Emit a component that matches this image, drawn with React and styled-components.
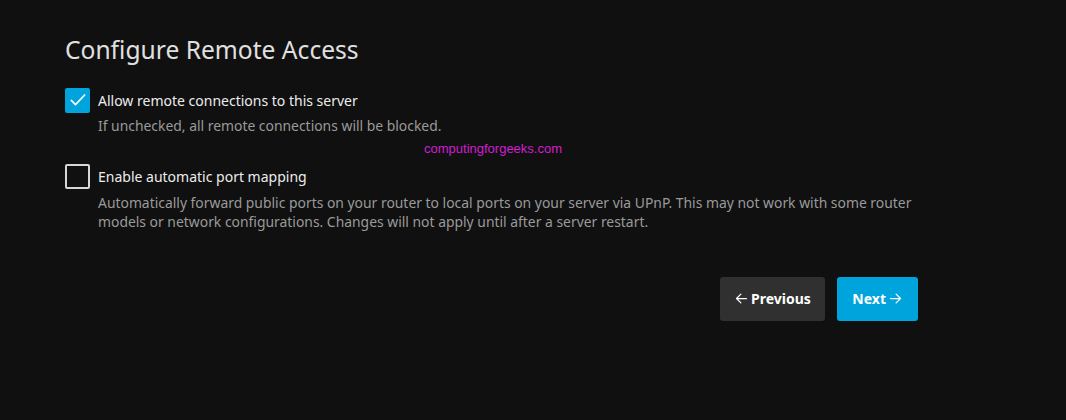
import React from 'react';
import styled, { createGlobalStyle } from 'styled-components';

const GlobalStyle = createGlobalStyle`
  html, body {
    margin: 0;
    padding: 0;
    background: #101010;
  }
  body {
    font-family: 'Noto Sans', 'Open Sans', sans-serif;
    color: rgba(255, 255, 255, 0.87);
  }
`;

const Page = styled.div`
  width: 1066px;
  height: 420px;
  box-sizing: border-box;
  padding: 33px 148px 0 65px;
  background: #101010;
`;

const Title = styled.h1`
  margin: 0 0 20px 0;
  font-size: 24.6px;
  font-weight: 400;
  line-height: 34px;
  color: #e0e0e0;
`;

const Field = styled.div``;

const CheckRow = styled.label`
  display: flex;
  align-items: center;
  gap: 8px;
  height: 26px;
`;

const Box = styled.span`
  width: 25px;
  height: 25px;
  box-sizing: border-box;
  border-radius: 2px;
  display: flex;
  align-items: center;
  justify-content: center;
  background: ${(p) => (p.$checked ? '#00a4dc' : 'transparent')};
  border: ${(p) => (p.$checked ? 'none' : '2px solid #d6d6d6')};
`;

const Label = styled.span`
  font-size: 14px;
  color: #ececec;
`;

const Desc = styled.div`
  margin: 3px 0 0 33px;
  font-size: 13.9px;
  line-height: 19.5px;
  color: #9a9a9a;
`;

const Watermark = styled.div`
  margin: 5px 0 7px 359px;
  font-family: 'Liberation Sans', Arial, sans-serif;
  font-size: 13px;
  line-height: 16px;
  color: #d21ed2;
`;

const Buttons = styled.div`
  display: flex;
  justify-content: flex-end;
  gap: 12px;
  margin-top: 45px;
`;

const Button = styled.button`
  height: 44px;
  padding: 0 ${(p) => (p.$primary ? '15px' : '14.5px')};
  border: none;
  border-radius: 3px;
  display: flex;
  align-items: center;
  gap: 2px;
  font-family: 'Noto Sans', 'Open Sans', sans-serif;
  font-size: 14px;
  font-weight: 700;
  color: #fff;
  background: ${(p) => (p.$primary ? '#00a4dc' : '#303030')};
  cursor: pointer;
`;

const Check = () => (
  <svg width="20" height="20" viewBox="0 0 24 24" fill="none" stroke="#fff" strokeWidth="2" strokeLinecap="round" strokeLinejoin="round">
    <path d="M4 12.5l5 5L20 6" />
  </svg>
);

const Arrow = ({ left }) => (
  <svg width="15" height="15" viewBox="0 0 24 24" fill="none" stroke="#fff" strokeWidth="2" strokeLinecap="round" strokeLinejoin="round">
    {left ? <path d="M20 12H4M11 5l-7 7 7 7" /> : <path d="M4 12h16M13 5l7 7-7 7" />}
  </svg>
);

export default function App() {
  return (
    <>
      <GlobalStyle />
      <Page>
        <Title>Configure Remote Access</Title>
        <Field>
          <CheckRow>
            <Box $checked>
              <Check />
            </Box>
            <Label>Allow remote connections to this server</Label>
          </CheckRow>
          <Desc>If unchecked, all remote connections will be blocked.</Desc>
        </Field>
        <Watermark>computingforgeeks.com</Watermark>
        <Field>
          <CheckRow>
            <Box />
            <Label>Enable automatic port mapping</Label>
          </CheckRow>
          <Desc>
            Automatically forward public ports on your router to local ports on your server via UPnP. This may not work with some router
            models or network configurations. Changes will not apply until after a server restart.
          </Desc>
        </Field>
        <Buttons>
          <Button>
            <Arrow left />
            Previous
          </Button>
          <Button $primary>
            Next
            <Arrow />
          </Button>
        </Buttons>
      </Page>
    </>
  );
}
